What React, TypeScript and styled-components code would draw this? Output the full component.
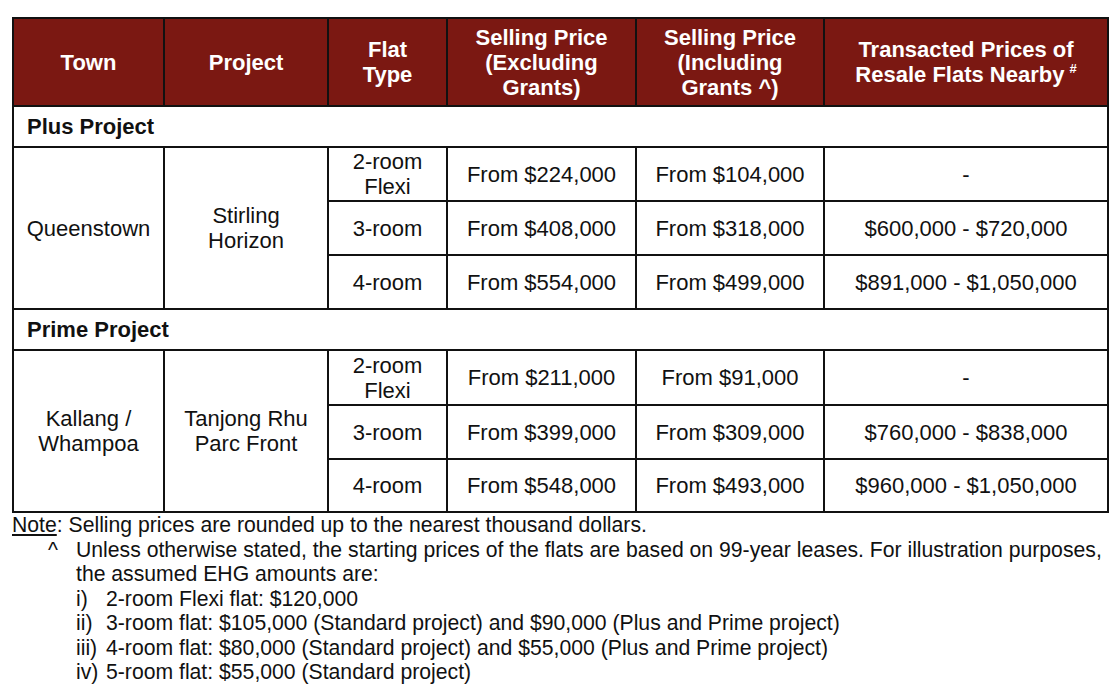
import React from "react";
import styled, { createGlobalStyle } from "styled-components";

const GlobalStyle = createGlobalStyle`
  html, body { margin: 0; padding: 0; background: #ffffff; }
  body { font-family: "Liberation Sans", Arial, sans-serif; color: #111111; }
`;

const Page = styled.div`
  padding: 17px 0 0 12px;
  width: 1095px;
`;

const Table = styled.table`
  width: 1095px;
  table-layout: fixed;
  border-collapse: collapse;
  border: 2px solid #111111;
  font-size: 22px;
  line-height: 25px;
`;

const Col = styled.col<{ $w: number }>`
  width: ${(p) => p.$w}px;
`;

const HeadRow = styled.tr`
  height: 88px;
  background: #7b1812;
`;

const HeadCell = styled.th`
  border: 2px solid #111111;
  color: #ffffff;
  font-weight: 700;
  text-align: center;
  vertical-align: middle;
  padding: 0 6px;
`;

const Sup = styled.sup`
  font-size: 13px;
  line-height: 0;
  vertical-align: 9px;
  margin-left: 5px;
`;

const SectionRow = styled.tr`
  height: 41px;
`;

const SectionCell = styled.td`
  border: 2px solid #111111;
  font-weight: 700;
  text-align: left;
  padding: 0 0 0 13px;
`;

const DataRow = styled.tr<{ $h: number }>`
  height: ${(p) => p.$h}px;
`;

const Cell = styled.td`
  border: 2px solid #111111;
  text-align: center;
  vertical-align: middle;
  padding: 0 4px;
`;

const Notes = styled.div`
  font-size: 21.2px;
  line-height: 24.5px;
  color: #111111;
`;

const NoteLine = styled.div``;

const Underlined = styled.span`
  text-decoration: underline;
  text-underline-offset: 2px;
`;

const Footnote = styled.div`
  display: grid;
  grid-template-columns: 64px 1fr;
`;

const Marker = styled.div`
  padding-left: 36px;
`;

const SubList = styled.div`
  display: grid;
  grid-template-columns: 30px 1fr;
`;

type Flat = { type: string; excl: string; incl: string; resale: string; h: number };
type Section = { title: string; town: string; project: string; flats: Flat[] };

const sections: Section[] = [
  {
    title: "Plus Project",
    town: "Queenstown",
    project: "Stirling\nHorizon",
    flats: [
      { type: "2-room\nFlexi", excl: "From $224,000", incl: "From $104,000", resale: "-", h: 54 },
      { type: "3-room", excl: "From $408,000", incl: "From $318,000", resale: "$600,000 - $720,000", h: 54 },
      { type: "4-room", excl: "From $554,000", incl: "From $499,000", resale: "$891,000 - $1,050,000", h: 54 },
    ],
  },
  {
    title: "Prime Project",
    town: "Kallang /\nWhampoa",
    project: "Tanjong Rhu\nParc Front",
    flats: [
      { type: "2-room\nFlexi", excl: "From $211,000", incl: "From $91,000", resale: "-", h: 55 },
      { type: "3-room", excl: "From $399,000", incl: "From $309,000", resale: "$760,000 - $838,000", h: 54 },
      { type: "4-room", excl: "From $548,000", incl: "From $493,000", resale: "$960,000 - $1,050,000", h: 53 },
    ],
  },
];

const Lines: React.FC<{ text: string }> = ({ text }) => (
  <>
    {text.split("\n").map((t, i) => (
      <React.Fragment key={i}>
        {i > 0 && <br />}
        {t}
      </React.Fragment>
    ))}
  </>
);

const subItems: [string, string][] = [
  ["i)", "2-room Flexi flat: $120,000"],
  ["ii)", "3-room flat: $105,000 (Standard project) and $90,000 (Plus and Prime project)"],
  ["iii)", "4-room flat: $80,000 (Standard project) and $55,000 (Plus and Prime project)"],
  ["iv)", "5-room flat: $55,000 (Standard project)"],
];

export default function App() {
  return (
    <Page>
      <GlobalStyle />
      <Table>
        <colgroup>
          <Col $w={151} />
          <Col $w={164} />
          <Col $w={119} />
          <Col $w={189} />
          <Col $w={188} />
          <Col $w={284} />
        </colgroup>
        <thead>
          <HeadRow>
            <HeadCell>Town</HeadCell>
            <HeadCell>Project</HeadCell>
            <HeadCell>
              Flat
              <br />
              Type
            </HeadCell>
            <HeadCell>
              Selling Price
              <br />
              (Excluding
              <br />
              Grants)
            </HeadCell>
            <HeadCell>
              Selling Price
              <br />
              (Including
              <br />
              Grants ^)
            </HeadCell>
            <HeadCell>
              Transacted Prices of
              <br />
              Resale Flats Nearby<Sup>#</Sup>
            </HeadCell>
          </HeadRow>
        </thead>
        <tbody>
          {sections.map((s) => (
            <React.Fragment key={s.title}>
              <SectionRow>
                <SectionCell colSpan={6}>{s.title}</SectionCell>
              </SectionRow>
              {s.flats.map((f, i) => (
                <DataRow key={f.type + i} $h={f.h}>
                  {i === 0 && (
                    <>
                      <Cell rowSpan={s.flats.length}>
                        <Lines text={s.town} />
                      </Cell>
                      <Cell rowSpan={s.flats.length}>
                        <Lines text={s.project} />
                      </Cell>
                    </>
                  )}
                  <Cell>
                    <Lines text={f.type} />
                  </Cell>
                  <Cell>{f.excl}</Cell>
                  <Cell>{f.incl}</Cell>
                  <Cell>{f.resale}</Cell>
                </DataRow>
              ))}
            </React.Fragment>
          ))}
        </tbody>
      </Table>
      <Notes>
        <NoteLine>
          <Underlined>Note</Underlined>: Selling prices are rounded up to the nearest thousand dollars.
        </NoteLine>
        <Footnote>
          <Marker>^</Marker>
          <div>
            <NoteLine>
              Unless otherwise stated, the starting prices of the flats are based on 99-year leases. For illustration purposes,
              the assumed EHG amounts are:
            </NoteLine>
            {subItems.map(([label, text]) => (
              <SubList key={label}>
                <span>{label}</span>
                <span>{text}</span>
              </SubList>
            ))}
          </div>
        </Footnote>
      </Notes>
    </Page>
  );
}
